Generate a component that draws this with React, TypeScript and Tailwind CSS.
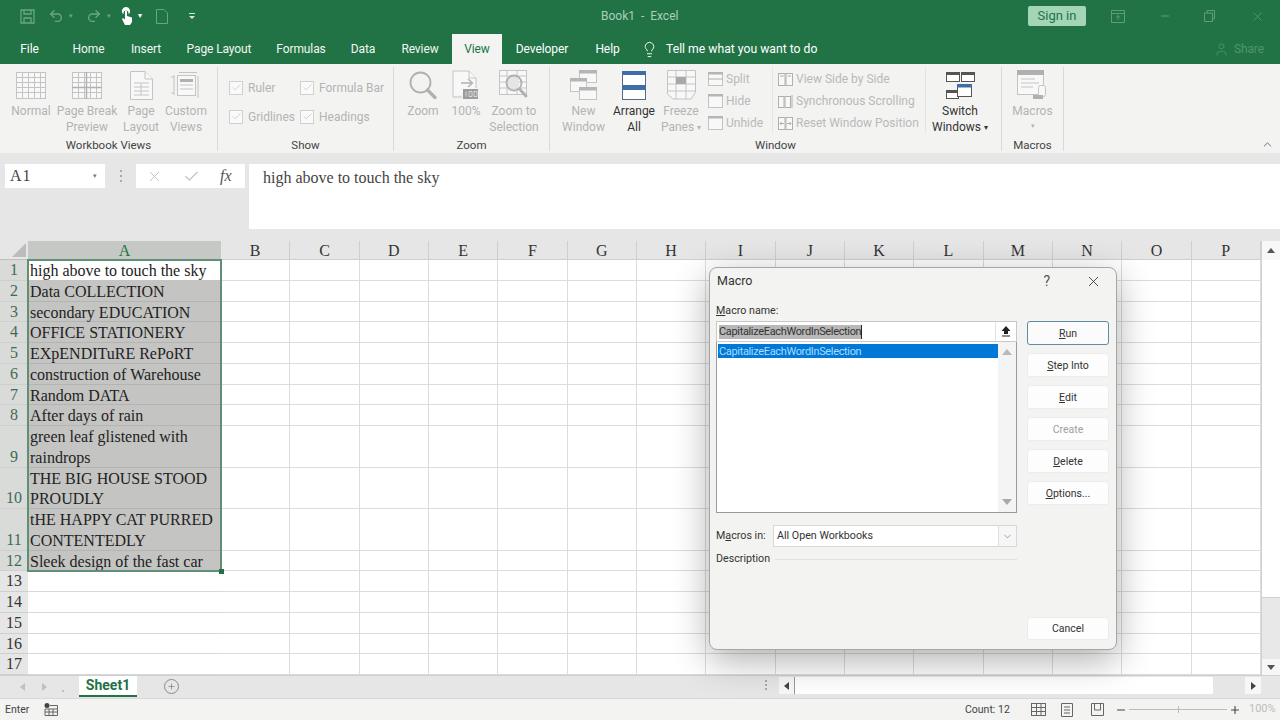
import type { ReactNode } from "react"
import { Undo2, Redo2, X, Check, Minus, Plus, ChevronDown, ChevronUp, Lightbulb, User } from "lucide-react"

const dim = "#c4c4c4"
const dimDark = "#b0b0b0"

const letters = ["B", "C", "D", "E", "F", "G", "H", "I", "J", "K", "L", "M", "N", "O", "P"]

const rows = [
    { n: 1, lines: ["high above to touch the sky"], sel: true },
    { n: 2, lines: ["Data COLLECTION"], sel: true },
    { n: 3, lines: ["secondary EDUCATION"], sel: true },
    { n: 4, lines: ["OFFICE STATIONERY"], sel: true },
    { n: 5, lines: ["EXpENDITuRE RePoRT"], sel: true },
    { n: 6, lines: ["construction of Warehouse"], sel: true },
    { n: 7, lines: ["Random DATA"], sel: true },
    { n: 8, lines: ["After days of rain"], sel: true },
    { n: 9, lines: ["green leaf glistened with", "raindrops"], sel: true },
    { n: 10, lines: ["THE BIG HOUSE STOOD", "PROUDLY"], sel: true },
    { n: 11, lines: ["tHE HAPPY CAT PURRED", "CONTENTEDLY"], sel: true },
    { n: 12, lines: ["Sleek design of the fast car"], sel: true },
    { n: 13, lines: [""], sel: false },
    { n: 14, lines: [""], sel: false },
    { n: 15, lines: [""], sel: false },
    { n: 16, lines: [""], sel: false },
    { n: 17, lines: [""], sel: false },
]

const tabs = [
    { label: "Home", w: "w-[59px]" },
    { label: "Insert", w: "w-[56px]" },
    { label: "Page Layout", w: "w-[90px]" },
    { label: "Formulas", w: "w-[74px]" },
    { label: "Data", w: "w-[50px]" },
    { label: "Review", w: "w-[64px]" },
]

const SheetIcon = ({ bold }: { bold?: boolean }) => (
    <svg width="30" height="27" viewBox="0 0 30 27" fill="none" stroke={dim} strokeWidth="1">
        <rect x="0.5" y="0.5" width="29" height="26" fill="#f8f8f8" />
        {[5, 10, 15, 20].map((y) => <path key={y} d={`M0 ${y + 0.5}H30`} />)}
        {[6, 12, 18, 24].map((x) => <path key={x} d={`M${x + 0.5} 0V27`} />)}
        {bold && <path d="M14.5 0V27M0 15.5H30" stroke={dimDark} strokeWidth="1.4" />}
    </svg>
)

const PageIcon = () => (
    <svg width="23" height="29" viewBox="0 0 23 29" fill="#f8f8f8" stroke={dim}>
        <path d="M.5.5H15L22.5 8V28.5H.5Z" />
        <path d="M15 .5V8H22.5" />
        <path d="M4 12H19M4 16H19M4 20H19M4 24H19M11 12V24" />
    </svg>
)

const CustomViewsIcon = () => (
    <svg width="30" height="27" viewBox="0 0 30 27" fill="none" stroke={dim}>
        <path d="M3 3V23M0 5H3M0 21H3M8 .5H26M27 4V26" />
        <rect x="6.5" y="3.5" width="18" height="20" fill="#f8f8f8" />
        <rect x="9" y="7" width="13" height="3" fill={dimDark} stroke="none" />
        <path d="M9 13H22M9 17H22" />
    </svg>
)

const ZoomIcon = () => (
    <svg width="28" height="28" viewBox="0 0 28 28" fill="none">
        <circle cx="11.5" cy="11.5" r="10" stroke={dimDark} strokeWidth="1.8" />
        <path d="M18.5 19L26 26.5" stroke={dimDark} strokeWidth="3.2" strokeLinecap="round" />
    </svg>
)

const HundredIcon = () => (
    <svg width="28" height="30" viewBox="0 0 28 30" fill="#f8f8f8" stroke={dim}>
        <path d="M1 27V1H17L24 8V18" />
        <path d="M17 1V8H24" />
        <path d="M9 13H20M16 9L20.5 13L16 17" stroke={dimDark} fill="none" strokeWidth="1.4" />
        <path d="M1 27H10" />
        <rect x="11" y="19" width="15" height="10" fill="#9c9c9c" stroke="none" />
        <path d="M14 21.5V26.5M17 21.5H20V26.5H17ZM22 21.5H25V26.5H22Z" stroke="#e5e5e5" fill="none" strokeWidth=".8" />
    </svg>
)

const ZoomSelIcon = () => (
    <svg width="30" height="30" viewBox="0 0 30 30" fill="none" stroke={dim}>
        <rect x=".5" y=".5" width="27" height="24" fill="#f8f8f8" />
        <path d="M0 6H28M0 12H28M0 18H28M8 0V25M18 0V25" />
        <rect x="8" y="6" width="12" height="12" fill="#e5e5e5" stroke="none" />
        <circle cx="15" cy="13" r="7.5" stroke={dimDark} strokeWidth="1.8" fill="none" />
        <path d="M20.5 19L27 26" stroke={dimDark} strokeWidth="3" strokeLinecap="round" />
    </svg>
)

const NewWindowIcon = () => (
    <svg width="27" height="30" viewBox="0 0 27 30" fill="#f8f8f8" stroke={dim}>
        <rect x="9.5" y=".5" width="17" height="12" />
        <rect x="9" y="0" width="18" height="3.5" fill="#b5b5b5" stroke="none" />
        <rect x=".5" y="8.5" width="16" height="13" />
        <rect x="0" y="8" width="17" height="3.5" fill="#b5b5b5" stroke="none" />
        <rect x="9.5" y="17.5" width="17" height="12" />
        <rect x="9" y="17" width="18" height="3.5" fill="#b5b5b5" stroke="none" />
    </svg>
)

const ArrangeIcon = () => (
    <svg width="24" height="29" viewBox="0 0 24 29" fill="#fff" stroke="#5a6b80">
        <rect x=".5" y=".5" width="23" height="28" />
        <rect x="0" y="0" width="24" height="4" fill="#3f6ea6" stroke="none" />
        <rect x="0" y="14" width="24" height="5" fill="#3f6ea6" stroke="none" />
    </svg>
)

const FreezeIcon = () => (
    <svg width="29" height="30" viewBox="0 0 29 30" fill="#f8f8f8" stroke={dim}>
        <path d="M.5.5H28.5V22L24 29H6L.5 24Z" />
        <path d="M0 7H29M0 14H29M0 21H29M9 0V29M19 0V29" />
        <rect x="9" y="7" width="10" height="7" fill="#a8a8a8" stroke="none" />
    </svg>
)

const SmallPane = ({ bar }: { bar?: boolean }) => (
    <svg width="15" height="14" viewBox="0 0 15 14" fill="#f8f8f8" stroke={dim}>
        <rect x=".5" y=".5" width="14" height="13" />
        <rect x="0" y="0" width="15" height="2.5" fill="#b5b5b5" stroke="none" />
        {bar && <path d="M0 7H15" stroke={dimDark} />}
    </svg>
)

const SideBySideIcon = () => (
    <svg width="15" height="13" viewBox="0 0 15 13" fill="#f8f8f8" stroke={dimDark}>
        <rect x=".5" y=".5" width="6.5" height="12" />
        <rect x="8" y=".5" width="6.5" height="12" />
        <path d="M2 3H6M9.500 3H13" />
    </svg>
)

const SyncIcon = () => (
    <svg width="15" height="15" viewBox="0 0 15 15" fill="#f8f8f8" stroke={dimDark}>
        <rect x=".5" y="2.500" width="5.500" height="11" />
        <rect x="7" y="2.500" width="5.500" height="11" />
        <path d="M14 1V14" />
    </svg>
)

const ResetIcon = () => (
    <svg width="15" height="13" viewBox="0 0 15 13" fill="#f8f8f8" stroke={dimDark}>
        <rect x=".5" y=".5" width="6.5" height="12" />
        <rect x="8" y=".5" width="6.5" height="12" />
        <path d="M2 6.500H6M3.500 5L2 6.500L3.500 8M9 6.500H13M11.500 5L13 6.500L11.500 8" />
    </svg>
)

const SwitchIcon = () => (
    <svg width="29" height="27" viewBox="0 0 29 27" fill="#fff" stroke="#555">
        <rect x=".5" y=".5" width="13" height="9" />
        <rect x="15.500" y=".5" width="13" height="9" />
        <rect x="0" y="0" width="14" height="3" fill="#555" stroke="none" />
        <rect x="15" y="0" width="14" height="3" fill="#555" stroke="none" />
        <rect x=".5" y="18.500" width="12" height="8" />
        <rect x="0" y="18" width="13" height="3" fill="#555" stroke="none" />
        <rect x="11.500" y="12.500" width="14" height="12" />
        <rect x="11" y="12" width="15" height="3.500" fill="#3f6ea6" stroke="none" />
    </svg>
)

const MacrosIcon = () => (
    <svg width="32" height="30" viewBox="0 0 32 30" fill="#f8f8f8" stroke={dim}>
        <rect x=".5" y=".5" width="26" height="24" />
        <rect x="0" y="0" width="27" height="5" fill="#b0b0b0" stroke="none" />
        <path d="M4 9H18M4 13H22M4 17H16" />
        <rect x="21.500" y="15.500" width="7" height="11" rx="2" />
        <rect x="16" y="25" width="10" height="4" fill="#b0b0b0" stroke="none" />
    </svg>
)

const MiniSheet = ({ color = "#555" }: { color?: string }) => (
    <svg width="15" height="13" viewBox="0 0 15 13" fill="none" stroke={color} strokeWidth="1">
        <rect x=".5" y=".5" width="14" height="12" />
        <path d="M0 4.500H15M0 8.500H15M5.500 0V13M10 0V13" />
    </svg>
)

const RibbonBtn = ({ w, icon, lines, active, caret }: { w: string; icon: ReactNode; lines: string[]; active?: boolean; caret?: boolean }) => (
    <div className={`${w} flex flex-col items-center`}>
        <div className="flex h-[36px] shrink-0 items-center justify-center">{icon}</div>
        <div className={`text-center text-[12px] leading-[16px] whitespace-nowrap ${active ? "text-[#333]" : "text-[#b4b4b4]"}`}>
            {lines.map((l, i) => (
                <div key={l}>
                    {l}
                    {caret && i === lines.length - 1 && <span className="ml-[3px] text-[8px] align-middle">▾</span>}
                </div>
            ))}
        </div>
    </div>
)

const Group = ({ w, label, children }: { w: string; label: string; children: ReactNode }) => (
    <div className={`${w} mt-[3px] flex h-[84px] shrink-0 flex-col border-r border-[#dadada]`}>
        <div className="flex h-[70px] shrink-0">{children}</div>
        <div className="shrink-0 text-center text-[11.5px] leading-[16px] text-[#444]">{label}</div>
    </div>
)

const CheckItem = ({ label }: { label: string }) => (
    <div className="flex h-[29px] w-[71px] items-center gap-[5px] whitespace-nowrap text-[12px] text-[#b4b4b4]">
        <span className="flex h-[14px] w-[14px] shrink-0 items-center justify-center border border-[#d0d0d0] bg-[#fafafa]">
            <Check size={11} color="#c0c0c0" strokeWidth={1.5} />
        </span>
        {label}
    </div>
)

const PaneRow = ({ icon, label }: { icon: ReactNode; label: string }) => (
    <div className="flex h-[22px] items-center gap-[3px] whitespace-nowrap text-[12px] text-[#b9b9b9]">
        {icon}
        {label}
    </div>
)

const DialogBtn = ({ children, disabled, primary, h = "h-[24px]" }: { children: ReactNode; disabled?: boolean; primary?: boolean; h?: string }) => (
    <div
        className={`flex ${h} items-center justify-center rounded-[3px] pt-[1px] text-[10.5px] ${
            primary ? "border border-[#5d8ca3] bg-[#fbfbfb]" : "border border-[#ececec] bg-[#fdfdfd]"
        } ${disabled ? "text-[#a0a0a0]" : "text-[#333]"}`}
    >
        {children}
    </div>
)

const MacroDialog = () => (
    <div className="absolute left-[709px] top-[267px] z-10 flex h-[383px] w-[408px] flex-col rounded-[8px] border border-[#a6a6a6] bg-[#f3f3f1] text-[#333] shadow-[0_10px_36px_rgba(0,0,0,0.32)]">
        <div className="flex h-[27px] items-center pl-[7px] text-[12.5px]">
            <span>Macro</span>
            <span className="ml-auto mr-[35px] text-[14px] text-[#555]">?</span>
            <X size={17} strokeWidth={1.2} color="#333" className="mr-[14px]" />
        </div>
        <div className="flex flex-1 pb-[9px] pl-[6px]">
            <div className="w-[301px]">
                <div className="h-[26px] pt-[8px] text-[10.7px] leading-[16px]"><u>M</u>acro name:</div>
                <div className="flex h-[21px] items-center border border-[#c8c8c8] bg-white pl-[2px] text-[11px] tracking-[-0.34px]">
                    <span className="border-r border-[#222] bg-[#b8b8b8] leading-[14px] text-[#333]">CapitalizeEachWordInSelection</span>
                    <div className="ml-auto flex h-full w-[21px] items-center justify-center border-l border-[#e2e2e2]">
                        <svg width="10" height="11" viewBox="0 0 10 11" fill="#222"><path d="M5 0L9.500 5H7V8H3V5H.5ZM1 9.500H9V10.500H1Z" /></svg>
                    </div>
                </div>
                <div className="flex h-[171px] border border-t-0 border-[#9a9a9a] bg-white">
                    <div className="flex-1 pl-[1px] pt-[2px]">
                        <div className="h-[14px] bg-[#0078d7] pl-[1px] text-[11px] leading-[15px] tracking-[-0.34px] text-[#a9dcff]">CapitalizeEachWordInSelection</div>
                    </div>
                    <div className="flex w-[18px] flex-col items-center justify-between bg-[#f4f4f4] py-[7px]">
                        <span className="h-0 w-0 border-x-[5px] border-b-[6px] border-x-transparent border-b-[#b8b8b8]" />
                        <span className="h-0 w-0 border-x-[5px] border-t-[6px] border-x-transparent border-t-[#a8a8a8]" />
                    </div>
                </div>
                <div className="mt-[12px] flex h-[22px] items-center text-[10.7px]">
                    <span className="w-[57px] pt-[1px]">M<u>a</u>cros in:</span>
                    <div className="flex h-full flex-1 items-center border border-[#d8d8d8] bg-white pl-[3px]">
                        <span className="pt-[1px]">All Open Workbooks</span>
                        <div className="ml-auto flex h-full w-[18px] items-center justify-center border-l border-[#e0e0e0] bg-[#f6f6f6]">
                            <ChevronDown size={11} color="#777" strokeWidth={1.4} />
                        </div>
                    </div>
                </div>
                <div className="mt-[4px] flex h-[16px] items-center text-[10.7px]">
                    <span className="w-[59px]">Description</span>
                    <span className="h-px flex-1 bg-[#e0e0e0]" />
                </div>
            </div>
            <div className="ml-[10px] flex w-[82px] flex-col gap-[8px] pt-[26px]">
                <DialogBtn primary><span><u>R</u>un</span></DialogBtn>
                <DialogBtn><span><u>S</u>tep Into</span></DialogBtn>
                <DialogBtn><span><u>E</u>dit</span></DialogBtn>
                <DialogBtn disabled>Create</DialogBtn>
                <DialogBtn><span><u>D</u>elete</span></DialogBtn>
                <DialogBtn><span><u>O</u>ptions...</span></DialogBtn>
                <div className="mt-auto"><DialogBtn h="h-[23px]">Cancel</DialogBtn></div>
            </div>
        </div>
    </div>
)

export default function App() {
    return (
        <div className="relative flex h-[720px] w-[1280px] flex-col overflow-hidden bg-white font-['Roboto',sans-serif]">
            {/* title bar */}
            <div className="flex h-[32px] shrink-0 items-center bg-[#217346] text-[#a9cfb9]">
                <svg className="ml-[20px]" width="15" height="15" viewBox="0 0 15 15" fill="none" stroke="#6aa585" strokeWidth="1.300">
                    <path d="M1 1H14V14H1ZM4 1V5H11V1M4 14V9H11V14" />
                </svg>
                <Undo2 className="ml-[13px]" size={16} color="#6aa585" />
                <span className="ml-[5px] text-[7px] text-[#6aa585]">▾</span>
                <Redo2 className="ml-[13px]" size={16} color="#6aa585" />
                <span className="ml-[5px] text-[7px] text-[#6aa585]">▾</span>
                <svg className="ml-[10px]" width="12" height="18" viewBox="0 0 12 18" fill="#fff">
                    <path d="M5 0A4 4 0 0 1 7.500 7.200V6A2.500 2.500 0 1 0 2.500 6V7.200A4 4 0 0 1 5 0Z" />
                    <path d="M4 4.500A1 1 0 0 1 6 4.500V9L11 10.500V15L9 18H4L1 12L2 11L4 12.500Z" />
                </svg>
                <span className="ml-[5px] text-[8px] text-white">▾</span>
                <svg className="ml-[14px]" width="12" height="15" viewBox="0 0 12 15" fill="none" stroke="#6aa585">
                    <path d="M.5.5H8L11.500 4V14.500H.5Z" />
                </svg>
                <svg className="ml-[20px]" width="8" height="8" viewBox="0 0 8 8" fill="#d5e6dc">
                    <path d="M1 1H7V2H1ZM1 4H7L4 7Z" />
                </svg>
                <span className="absolute left-[601px] text-[12px]">Book1&nbsp; -&nbsp; Excel</span>
                <div className="ml-auto flex items-center">
                    <div className="mr-[25px] flex h-[20px] w-[58px] items-center justify-center rounded-[2px] bg-[#a3d5b6] text-[13px] text-[#217346]">Sign in</div>
                    <svg className="mr-[34px]" width="14" height="13" viewBox="0 0 14 13" fill="none" stroke="#5f9d7c">
                        <path d="M.5.5H13.500V12.500H.5ZM.5 3.500H13.500M7 10V5.500M5 7.500L7 5.500L9 7.500" />
                    </svg>
                    <Minus className="mr-[33px]" size={12} color="#5f9d7c" />
                    <svg className="mr-[35px]" width="11" height="12" viewBox="0 0 11 12" fill="none" stroke="#5f9d7c">
                        <path d="M.5 3H8.500V11.500H.5ZM3 3V.5H10.500V9H8.500" />
                    </svg>
                    <X className="mr-[15px]" size={15} color="#5f9d7c" strokeWidth={1.2} />
                </div>
            </div>

            {/* tabs */}
            <div className="flex h-[32px] shrink-0 items-end bg-[#217346] pl-[8px] text-[12px] tracking-[-0.1px] text-white">
                <div className="flex h-[30px] w-[43px] items-center justify-center">File</div>
                <div className="w-[8px]" />
                {tabs.map((t) => (
                    <div key={t.label} className={`flex h-[30px] ${t.w} items-center justify-center text-[#f2f7f4]`}>{t.label}</div>
                ))}
                <div className="flex h-[30px] w-[50px] items-center justify-center bg-[#f3f3f2] text-[#217346]">View</div>
                <div className="flex h-[30px] w-[80px] items-center justify-center">Developer</div>
                <div className="flex h-[30px] w-[51px] items-center justify-center">Help</div>
                <div className="flex h-[30px] items-center gap-[8px] px-[8px] text-[12.2px] tracking-normal">
                    <Lightbulb size={17} strokeWidth={1.3} color="#fff" />
                    Tell me what you want to do
                </div>
                <div className="ml-auto mr-[16px] flex h-[30px] items-center gap-[5px] text-[#4f9470]">
                    <User size={15} strokeWidth={1.300} color="#4f9470" />
                    Share
                </div>
            </div>

            {/* ribbon */}
            <div className="relative flex h-[89px] shrink-0 bg-[#f3f3f2]">
                <Group w="w-[218px]" label="Workbook Views">
                    <div className="w-[4px]" />
                    <RibbonBtn w="w-[54px]" icon={<SheetIcon />} lines={["Normal"]} />
                    <RibbonBtn w="w-[58px]" icon={<SheetIcon bold />} lines={["Page Break", "Preview"]} />
                    <RibbonBtn w="w-[50px]" icon={<PageIcon />} lines={["Page", "Layout"]} />
                    <RibbonBtn w="w-[40px]" icon={<CustomViewsIcon />} lines={["Custom", "Views"]} />
                </Group>
                <Group w="w-[176px]" label="Show">
                    <div className="grid grid-cols-[71px_71px] content-start pl-[11px] pt-[6px]">
                        <CheckItem label="Ruler" />
                        <CheckItem label="Formula Bar" />
                        <CheckItem label="Gridlines" />
                        <CheckItem label="Headings" />
                    </div>
                </Group>
                <Group w="w-[156px]" label="Zoom">
                    <div className="w-[6px]" />
                    <RibbonBtn w="w-[46px]" icon={<ZoomIcon />} lines={["Zoom"]} />
                    <RibbonBtn w="w-[40px]" icon={<HundredIcon />} lines={["100%"]} />
                    <RibbonBtn w="w-[56px]" icon={<ZoomSelIcon />} lines={["Zoom to", "Selection"]} />
                </Group>
                <Group w="w-[452px]" label="Window">
                    <div className="w-[8px]" />
                    <RibbonBtn w="w-[51px]" icon={<NewWindowIcon />} lines={["New", "Window"]} />
                    <RibbonBtn w="w-[50px]" icon={<ArrangeIcon />} lines={["Arrange", "All"]} active />
                    <RibbonBtn w="w-[44px]" icon={<FreezeIcon />} lines={["Freeze", "Panes"]} caret />
                    <div className="w-[69px] pl-[5px] pt-[1px]">
                        <PaneRow icon={<SmallPane bar />} label="Split" />
                        <PaneRow icon={<SmallPane />} label="Hide" />
                        <PaneRow icon={<SmallPane />} label="Unhide" />
                    </div>
                    <div className="h-[66px] w-[154px] border-x border-[#e4e4e4] pl-[5px] pt-[1px]">
                        <PaneRow icon={<SideBySideIcon />} label="View Side by Side" />
                        <PaneRow icon={<SyncIcon />} label="Synchronous Scrolling" />
                        <PaneRow icon={<ResetIcon />} label="Reset Window Position" />
                    </div>
                    <RibbonBtn w="w-[68px]" icon={<SwitchIcon />} lines={["Switch", "Windows"]} active caret />
                </Group>
                <Group w="w-[62px]" label="Macros">
                    <div className="flex w-full flex-col items-center">
                        <RibbonBtn w="w-full" icon={<MacrosIcon />} lines={["Macros"]} />
                        <span className="text-[7px] leading-[14px] text-[#b4b4b4]">▾</span>
                    </div>
                </Group>
                <ChevronUp className="ml-auto mr-[6px] mt-[74px]" size={13} color="#555" strokeWidth={1.5} />
            </div>

            {/* formula bar */}
            <div className="flex h-[88px] shrink-0 items-start bg-[#e6e6e6] pt-[11px]">
                <div className="ml-[5px] flex h-[24px] w-[100px] items-center bg-white pl-[5px] font-['Liberation_Serif',serif] text-[16px] tracking-[1px] text-[#444]">
                    A1
                    <span className="ml-auto mr-[7px] text-[7px] text-[#777]">▾</span>
                </div>
                <div className="flex h-[24px] w-[31px] flex-col items-center justify-center gap-[3px]">
                    <span className="h-[2px] w-[2px] bg-[#aaa]" />
                    <span className="h-[2px] w-[2px] bg-[#aaa]" />
                    <span className="h-[2px] w-[2px] bg-[#aaa]" />
                </div>
                <div className="flex h-[24px] w-[109px] items-center bg-white pl-[10px]">
                    <X size={17} color="#c0c0c0" strokeWidth={1.3} />
                    <Check className="ml-[20px]" size={17} color="#c0c0c0" strokeWidth={1.6} />
                    <span className="ml-[20px] font-['Liberation_Serif',serif] text-[16px] italic text-[#555]">fx</span>
                </div>
                <div className="ml-[4px] h-[65px] flex-1 bg-white pl-[14px] pt-[2px] font-['Liberation_Serif',serif] text-[16px] leading-[24px] text-[#444]">
                    high above to touch the sky
                </div>
            </div>

            {/* sheet */}
            <div className="flex shrink-0">
                <div className="relative w-[1261px] font-['Liberation_Serif',serif] text-[16px] text-[#333]">
                    <div className="flex h-[19px] bg-[#e6e6e6] leading-[20px]">
                        <div className="relative w-[28px] border-b border-[#bdbdbd]">
                            <span className="absolute bottom-[2px] right-[2px] h-0 w-0 border-b-[14px] border-l-[14px] border-b-[#bcbcbc] border-l-transparent" />
                        </div>
                        <div className="w-[193px] border-b border-[#217346] bg-[#c6c8c6] text-center text-[#217346]">A</div>
                        {letters.map((l) => (
                            <div key={l} className="flex-1 border-r border-b border-[#cfcfcf] text-center">{l}</div>
                        ))}
                    </div>
                    {rows.map((r) => {
                        const two = r.lines.length === 2
                        return (
                            <div key={r.n} className={`flex ${two ? "h-[41.5px]" : "h-[20.75px]"} leading-[20.75px]`}>
                                <div className={`flex w-[28px] items-end justify-center border-b border-[#cfcfcf] ${r.sel ? "bg-[#d9dbd9] text-[#3f6a55]" : "bg-[#e6e6e6]"}`}>
                                    <span className="-mb-[1px]">{r.n}</span>
                                </div>
                                <div className={`w-[193px] whitespace-nowrap border-b pl-[2px] pt-[1px] text-[#222] ${r.n === 1 ? "border-[#c4c4c2] bg-white" : r.sel ? "border-[#b4b4b2] bg-[#c4c4c2]" : "border-[#d8d8d8]"}`}>
                                    {r.lines.map((l) => <div key={l}>{l}</div>)}
                                </div>
                                {letters.map((l) => (
                                    <div key={l} className="flex-1 border-r border-b border-[#dcdcdc]" />
                                ))}
                            </div>
                        )
                    })}
                    <div className="absolute left-[27px] top-[18px] h-[313px] w-[195px] border-2 border-[#5f9077]" />
                    <div className="absolute left-[219px] top-[328px] h-[5px] w-[5px] bg-[#217346]" />
                </div>
                <div className="flex w-[19px] flex-col border-l border-[#d0d0d0] bg-[#e8e8e8]">
                    <div className="flex h-[19px] items-center justify-center bg-[#f7f7f7]">
                        <span className="h-0 w-0 border-x-[4px] border-b-[5px] border-x-transparent border-b-[#555]" />
                    </div>
                    <div className="h-[338px] border-b border-[#d0d0d0] bg-white" />
                    <div className="flex-1" />
                    <div className="flex h-[16px] items-center justify-center bg-[#f7f7f7]">
                        <span className="h-0 w-0 border-x-[4px] border-t-[5px] border-x-transparent border-t-[#555]" />
                    </div>
                </div>
            </div>

            {/* sheet tabs */}
            <div className="flex h-[23px] shrink-0 items-start border-t border-[#cfcfcf] bg-[#e6e6e6]">
                <span className="ml-[20px] mt-[7px] h-0 w-0 border-y-[4px] border-r-[5px] border-y-transparent border-r-[#c0c0c0]" />
                <span className="ml-[17px] mt-[7px] h-0 w-0 border-y-[4px] border-l-[5px] border-y-transparent border-l-[#c0c0c0]" />
                <span className="ml-[15px] mt-[14px] h-[2px] w-[2px] bg-[#c0c0c0]" />
                <div className="ml-[15px] flex h-[21px] w-[58px] items-center justify-center border-b-2 border-[#217346] bg-white text-[14px] font-bold text-[#217346]">Sheet1</div>
                <div className="ml-[27px] mt-[3px] flex h-[15px] w-[15px] items-center justify-center rounded-full border border-[#8a8a8a]">
                    <Plus size={9} color="#666" strokeWidth={1.5} />
                </div>
                <div className="ml-[586px] mt-[4px] flex flex-col gap-[2px]">
                    <span className="h-[2px] w-[2px] bg-[#aaa]" />
                    <span className="h-[2px] w-[2px] bg-[#aaa]" />
                    <span className="h-[2px] w-[2px] bg-[#aaa]" />
                </div>
                <div className="ml-[12px] mt-[1px] flex h-[17px] w-[482px] items-stretch">
                    <div className="flex w-[16px] items-center justify-center border-r border-[#999] bg-[#f7f7f7]">
                        <span className="h-0 w-0 border-y-[4px] border-r-[5px] border-y-transparent border-r-[#444]" />
                    </div>
                    <div className="w-[418px] bg-white" />
                    <div className="flex-1" />
                    <div className="flex w-[16px] items-center justify-center bg-[#f7f7f7]">
                        <span className="h-0 w-0 border-y-[4px] border-l-[5px] border-y-transparent border-l-[#444]" />
                    </div>
                </div>
            </div>

            {/* status bar */}
            <div className="flex h-[22px] shrink-0 items-center border-t border-[#d8d8d8] bg-[#f3f3f2] text-[10.5px] text-[#444]">
                <span className="ml-[5px] w-[39px] shrink-0">Enter</span>
                <svg className="shrink-0" width="14" height="13" viewBox="0 0 14 13" fill="none" stroke="#666">
                    <circle cx="3" cy="2.500" r="2.500" fill="#444" stroke="none" />
                    <path d="M6 2.500H13.500V12.500H1V6M1 6H13.500M1 9H13.500M5 6V12.500M9 6V12.500" />
                </svg>
                <span className="ml-[907px] w-[44px] shrink-0 whitespace-nowrap">Count: 12</span>
                <div className="ml-[22px] shrink-0"><MiniSheet color="#666" /></div>
                <svg className="ml-[15px] shrink-0" width="12" height="14" viewBox="0 0 12 14" fill="none" stroke="#666">
                    <path d="M.5.5H11.500V13.500H.5ZM3 4H9M3 7H9M3 10H9" />
                </svg>
                <svg className="ml-[18px] shrink-0" width="13" height="13" viewBox="0 0 13 13" fill="none" stroke="#666">
                    <path d="M.5.5H12.500V12.500H.5ZM3.500.5V7H9.500V.5" />
                </svg>
                <Minus className="ml-[11px] shrink-0" size={12} color="#444" strokeWidth={2.2} />
                <div className="relative ml-[2px] h-px w-[98px] shrink-0 bg-[#bbb]">
                    <span className="absolute left-[49px] top-[-3px] h-[7px] w-px bg-[#bbb]" />
                </div>
                <Plus className="ml-[2px] shrink-0" size={12} color="#444" strokeWidth={2.2} />
                <span className="ml-[8px] shrink-0 text-[11px] text-[#bdbdbd]">100%</span>
            </div>

            <MacroDialog />
        </div>
    )
}
